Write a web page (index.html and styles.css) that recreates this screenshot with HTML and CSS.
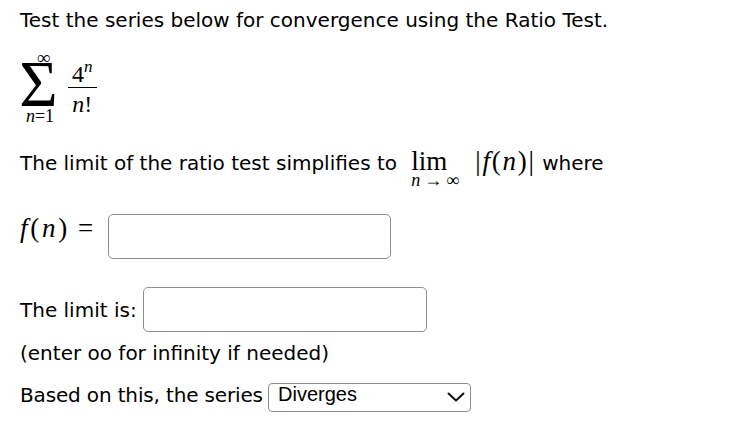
FILE: index.html
```html
<!DOCTYPE html>
<html lang="en">
<head>
<meta charset="utf-8">
<title>Ratio Test</title>
<link rel="stylesheet" href="styles.css">
</head>
<body>
<div class="page">
  <p class="title">Test the series below for convergence using the Ratio Test.</p>

  <div class="series m">
    <span class="sum">
      <span class="sum-sup">∞</span>
      <span class="sum-sigma">Σ</span>
      <span class="sum-sub"><i>n</i>=1</span>
    </span>
    <span class="frac">
      <span class="frac-num">4<sup class="exp"><i>n</i></sup></span>
      <span class="frac-den"><i>n</i>!</span>
    </span>
  </div>

  <p class="limline">The limit of the ratio test simplifies to <span class="lim m"><span class="lim-op">lim</span><span class="lim-sub"><i>n</i><span class="arrow">→</span>∞</span></span><span class="abs m">|<i>f</i>(<i>n</i>)|</span> where</p>

  <div class="frow">
    <span class="fn m"><span class="fn-f"><i>f</i>(<i>n</i>)</span><span class="eq">=</span></span>
    <input class="field field-f" type="text" aria-label="f(n)">
  </div>

  <div class="limrow">
    <span class="limlabel">The limit is:</span>
    <input class="field field-l" type="text" aria-label="The limit">
  </div>

  <p class="hint">(enter oo for infinity if needed)</p>

  <div class="basedrow">
    <span class="basedlabel">Based on this, the series</span>
    <div class="select" role="combobox" aria-expanded="false">
      <span class="select-text">Diverges</span>
      <svg class="chev" width="18" height="10" viewBox="0 0 18 10" aria-hidden="true">
        <polyline points="1.5,1.5 9,8.5 16.5,1.5" fill="none" stroke="#111" stroke-width="2" stroke-linecap="round" stroke-linejoin="round"/>
      </svg>
    </div>
  </div>
</div>
</body>
</html>
```

FILE: styles.css
```css
* { box-sizing: border-box; }

body {
  margin: 0;
  background: #fff;
  color: #000;
  font-family: "DejaVu Sans", Verdana, sans-serif;
  font-size: 20px;
  line-height: 23px;
}

.page { padding-left: 20px; }

p { margin: 0; }

.m { font-family: "Liberation Serif", "DejaVu Serif", serif; }
.m i { font-style: italic; }

.title { margin-top: 9px; }

/* series */
.series {
  display: flex;
  align-items: flex-start;
  margin-top: 22px;
  height: 70px;
}
.sum {
  display: flex;
  flex-direction: column;
  align-items: center;
  width: 40px;
}
.sum-sup { font-size: 19px; line-height: 8px; padding-top: 0; padding-left: 7px; }
.sum-sigma { font-size: 66px; line-height: 36px; margin-top: 3.5px; margin-left: -3px; }
.sum-sub { font-size: 18px; line-height: 20px; padding-top: 4.5px; }

.frac {
  display: flex;
  flex-direction: column;
  margin-left: 8px;
  margin-top: 7px;
  font-size: 24px;
}
.frac-num {
  line-height: 26px;
  border-bottom: 1.5px solid #000;
  text-align: center;
  padding: 0 4px;
}
.frac-den {
  line-height: 26px;
  padding-top: 3px;
  text-align: center;
}
.exp {
  font-size: 17px;
  line-height: 0;
  vertical-align: 10px;
}

/* limit line */
.limline {
  margin-top: 28px;
  height: 36px;
  white-space: nowrap;
}
.lim {
  display: inline-flex;
  flex-direction: column;
  align-items: flex-start;
  margin-left: 8px;
  vertical-align: baseline;
}
.lim-op { font-size: 27px; line-height: 19px; }
.lim-sub { font-size: 18px; line-height: 16px; margin-top: 1px; white-space: nowrap; }
.arrow { margin: 0 4px; }
.abs {
  font-size: 27px;
  line-height: 19px;
  margin-left: 16px;
  letter-spacing: 1.8px;
}

/* f(n) row */
.frow {
  display: flex;
  align-items: flex-start;
  margin-top: 26px;
}
.fn {
  display: flex;
  width: 88px;
  font-size: 27px;
  line-height: 28px;
}
.fn-f { letter-spacing: 2.75px; }
.eq { margin-left: 8px; }

.field {
  height: 45px;
  border: 1px solid #8f8f8f;
  border-radius: 5px;
  background: #fff;
  padding: 0 8px;
  font: inherit;
  font-size: 19px;
  outline: none;
}
.field-f { width: 283px; }
.field-l { width: 284px; }

.limrow {
  display: flex;
  align-items: flex-start;
  margin-top: 28px;
}
.limlabel { width: 123px; margin-top: 12px; white-space: nowrap; }

.hint { margin-top: 10px; }

.basedrow {
  display: flex;
  align-items: flex-start;
  margin-top: 18px;
}
.basedlabel { width: 248px; margin-top: 1px; white-space: nowrap; letter-spacing: -0.15px; }

.select {
  position: relative;
  width: 203px;
  height: 29px;
  border: 1px solid #8f8f8f;
  border-radius: 4px;
  background: #fff;
  padding-left: 9px;
  font-family: "Liberation Sans", Arial, sans-serif;
  font-size: 20px;
  line-height: 20px;
}
.select-text { display: block; }
.chev {
  position: absolute;
  right: 5px;
  top: 8px;
}
```
